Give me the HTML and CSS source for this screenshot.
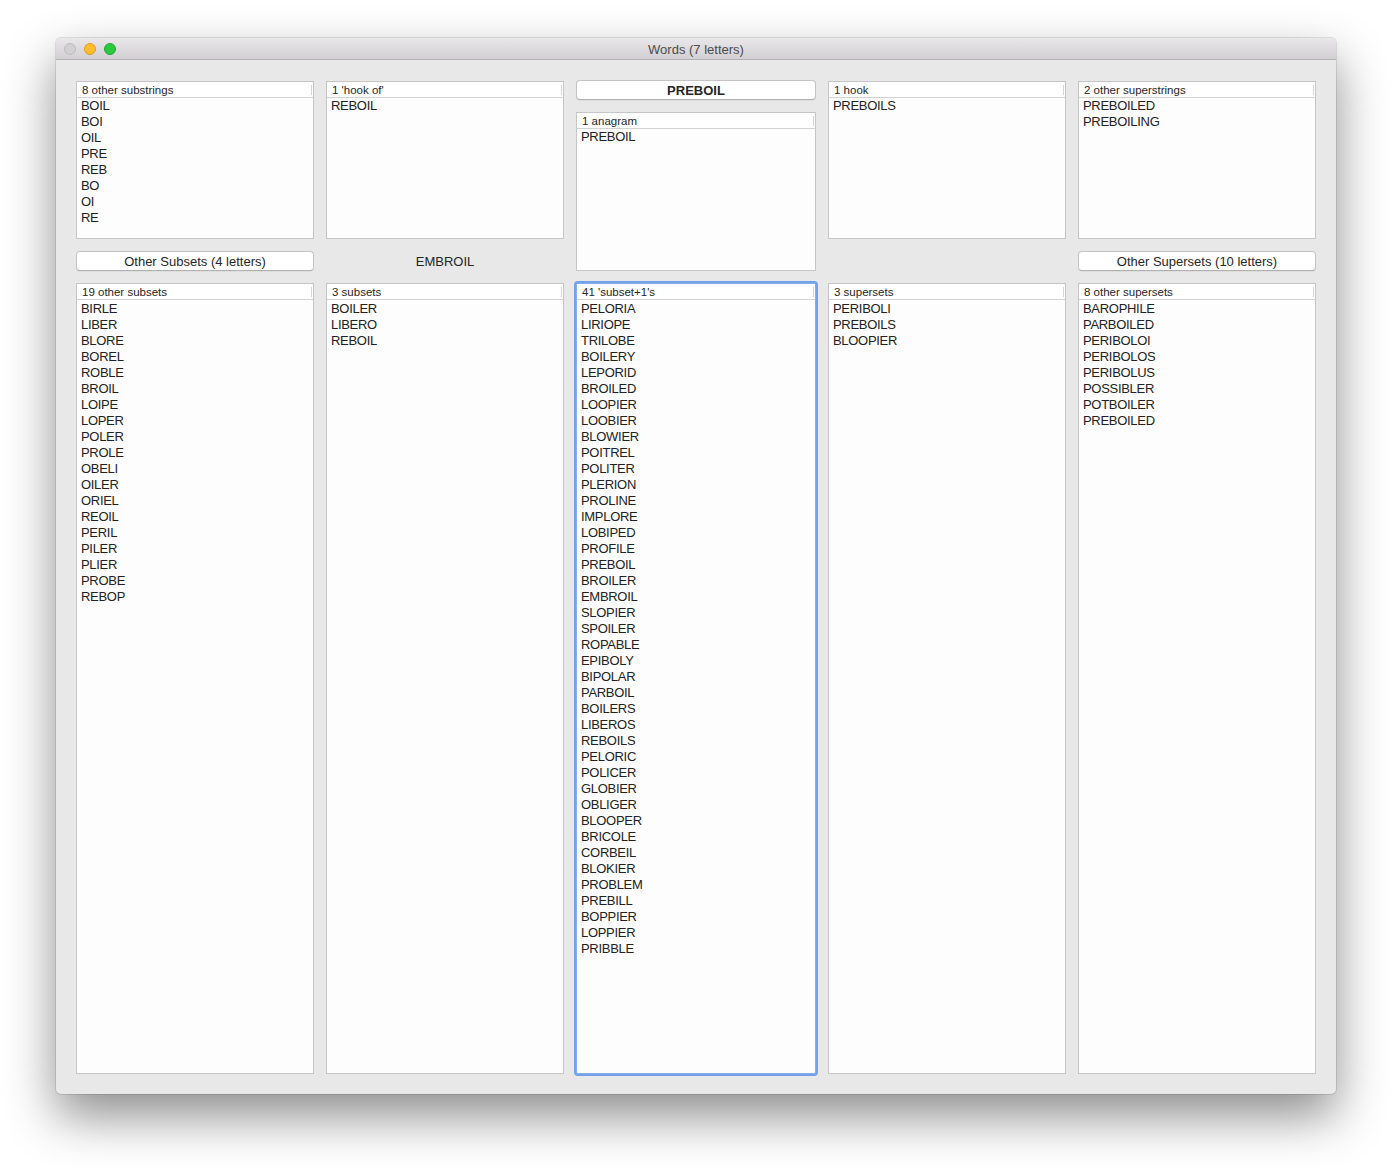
FILE: index.html
```html
<!DOCTYPE html>
<html>
	<head>
		<meta charset="UTF-8">
		<title>Words (7 letters)</title>
		<link rel="stylesheet" href="styles.css">
	</head>
	<body>
		<div class="win">
			<div class="titlebar">
				<div class="lights">
					<span class="light off"></span>
					<span class="light min"></span>
					<span class="light max"></span>
				</div>
				<div class="wtitle">Words (7 letters)</div>
			</div>
			<div class="content">
				<!-- top row -->
				<div class="list c1 r1">
					<div class="lhead">8 other substrings</div>
					<div class="litems">
						<div>BOIL</div><div>BOI</div><div>OIL</div><div>PRE</div>
						<div>REB</div><div>BO</div><div>OI</div><div>RE</div>
					</div>
				</div>
				<div class="list c2 r1">
					<div class="lhead">1 'hook of'</div>
					<div class="litems">
						<div>REBOIL</div>
					</div>
				</div>
				<div class="center c3">
					<div class="btn bold">PREBOIL</div>
					<div class="list anagram">
						<div class="lhead">1 anagram</div>
						<div class="litems">
							<div>PREBOIL</div>
						</div>
					</div>
				</div>
				<div class="list c4 r1">
					<div class="lhead">1 hook</div>
					<div class="litems">
						<div>PREBOILS</div>
					</div>
				</div>
				<div class="list c5 r1">
					<div class="lhead">2 other superstrings</div>
					<div class="litems">
						<div>PREBOILED</div><div>PREBOILING</div>
					</div>
				</div>

				<!-- middle row -->
				<div class="btn c1 r2">Other Subsets (4 letters)</div>
				<div class="label c2 r2">EMBROIL</div>
				<div class="btn c5 r2">Other Supersets (10 letters)</div>

				<!-- bottom row -->
				<div class="list c1 r3">
					<div class="lhead">19 other subsets</div>
					<div class="litems">
						<div>BIRLE</div><div>LIBER</div><div>BLORE</div><div>BOREL</div>
						<div>ROBLE</div><div>BROIL</div><div>LOIPE</div><div>LOPER</div>
						<div>POLER</div><div>PROLE</div><div>OBELI</div><div>OILER</div>
						<div>ORIEL</div><div>REOIL</div><div>PERIL</div><div>PILER</div>
						<div>PLIER</div><div>PROBE</div><div>REBOP</div>
					</div>
				</div>
				<div class="list c2 r3">
					<div class="lhead">3 subsets</div>
					<div class="litems">
						<div>BOILER</div><div>LIBERO</div><div>REBOIL</div>
					</div>
				</div>
				<div class="list c3 r3 focus">
					<div class="lhead">41 'subset+1's</div>
					<div class="litems">
						<div>PELORIA</div><div>LIRIOPE</div><div>TRILOBE</div><div>BOILERY</div>
						<div>LEPORID</div><div>BROILED</div><div>LOOPIER</div><div>LOOBIER</div>
						<div>BLOWIER</div><div>POITREL</div><div>POLITER</div><div>PLERION</div>
						<div>PROLINE</div><div>IMPLORE</div><div>LOBIPED</div><div>PROFILE</div>
						<div>PREBOIL</div><div>BROILER</div><div>EMBROIL</div><div>SLOPIER</div>
						<div>SPOILER</div><div>ROPABLE</div><div>EPIBOLY</div><div>BIPOLAR</div>
						<div>PARBOIL</div><div>BOILERS</div><div>LIBEROS</div><div>REBOILS</div>
						<div>PELORIC</div><div>POLICER</div><div>GLOBIER</div><div>OBLIGER</div>
						<div>BLOOPER</div><div>BRICOLE</div><div>CORBEIL</div><div>BLOKIER</div>
						<div>PROBLEM</div><div>PREBILL</div><div>BOPPIER</div><div>LOPPIER</div>
						<div>PRIBBLE</div>
					</div>
				</div>
				<div class="list c4 r3">
					<div class="lhead">3 supersets</div>
					<div class="litems">
						<div>PERIBOLI</div><div>PREBOILS</div><div>BLOOPIER</div>
					</div>
				</div>
				<div class="list c5 r3">
					<div class="lhead">8 other supersets</div>
					<div class="litems">
						<div>BAROPHILE</div><div>PARBOILED</div><div>PERIBOLOI</div><div>PERIBOLOS</div>
						<div>PERIBOLUS</div><div>POSSIBLER</div><div>POTBOILER</div><div>PREBOILED</div>
					</div>
				</div>
			</div>
		</div>
	</body>
</html>
```

FILE: styles.css
```css
html, body{
	height:100%;
}
body{
	margin:0;
	background:#fff;
	font-family:"Liberation Sans", Arial, sans-serif;
	color:#222;
	padding-top:38px;
	box-sizing:border-box;
}
.win{
	margin-left:56px;
	width:1280px;
	height:1056px;
	background:#e8e8e8;
	border-radius:5px;
	box-shadow:0 0 0 1px rgba(0,0,0,0.1), 0 22px 50px rgba(0,0,0,0.45);
	display:flex;
	flex-direction:column;
	overflow:hidden;
}
.titlebar{
	height:21px;
	flex:none;
	display:flex;
	align-items:center;
	position:relative;
	background:linear-gradient(#e9e7e9, #d2d0d2);
	border-bottom:1px solid #b1b1b1;
}
.lights{
	display:flex;
	gap:8px;
	padding-left:8px;
	position:absolute;
	top:5px;
}
.light{
	width:12px;
	height:12px;
	border-radius:50%;
	box-sizing:border-box;
}
.light.off{
	background:#d2d0d2;
	border:1px solid #bdbbbd;
}
.light.min{
	background:#fdbb2f;
	border:1px solid #e09e1d;
}
.light.max{
	background:#2bc840;
	border:1px solid #1ea930;
}
.wtitle{
	flex:1;
	text-align:center;
	font-size:13px;
	color:#4c4c4c;
	padding-top:1px;
}
.content{
	flex:1;
	padding:20px 20px 20px 20px;
	display:grid;
	grid-template-columns:238px 238px 240px 238px 238px;
	grid-template-rows:159px 20px 1fr;
	column-gap:12px;
	row-gap:12px;
}
.c1{ grid-column:1; }
.c2{ grid-column:2; }
.c3{ grid-column:3; }
.c4{ grid-column:4; }
.c5{ grid-column:5; }
.r1{ grid-row:1; }
.r2{ grid-row:2; }
.r3{ grid-row:3; }
.r1.list{
	margin-top:1px;
}
.center{
	grid-row:1 / 3;
	display:flex;
	flex-direction:column;
	gap:12px;
}
.list{
	background:#fdfdfd;
	border:1px solid #c6c6c6;
	display:flex;
	flex-direction:column;
	min-height:0;
}
.anagram{
	flex:1;
}
.lhead{
	height:15px;
	line-height:16px;
	font-size:11.5px;
	padding-left:5px;
	color:#262626;
	background:#fff;
	border-bottom:1px solid #d3d3d3;
	position:relative;
	flex:none;
}
.lhead::after{
	content:"";
	position:absolute;
	right:1px;
	top:3px;
	height:10px;
	border-right:1px solid #d6d6d6;
}
.litems{
	padding-left:4px;
	font-size:13px;
	line-height:16px;
	letter-spacing:-0.3px;
	color:#222;
}
.r3 .litems{
	padding-top:1px;
}
.focus{
	border-color:#86aeea;
	border-radius:2px;
	box-shadow:0 0 0 2px #72a0ea;
}
.btn{
	height:20px;
	box-sizing:border-box;
	background:#fff;
	border:1px solid #c4c4c4;
	border-bottom-color:#b0b0b0;
	border-radius:4px;
	text-align:center;
	font-size:13px;
	line-height:19px;
	color:#262626;
	flex:none;
	box-shadow:0 1px 0 rgba(0,0,0,0.04);
}
.btn.bold{
	font-weight:bold;
}
.label{
	text-align:center;
	font-size:13px;
	line-height:22px;
	color:#262626;
}
```
